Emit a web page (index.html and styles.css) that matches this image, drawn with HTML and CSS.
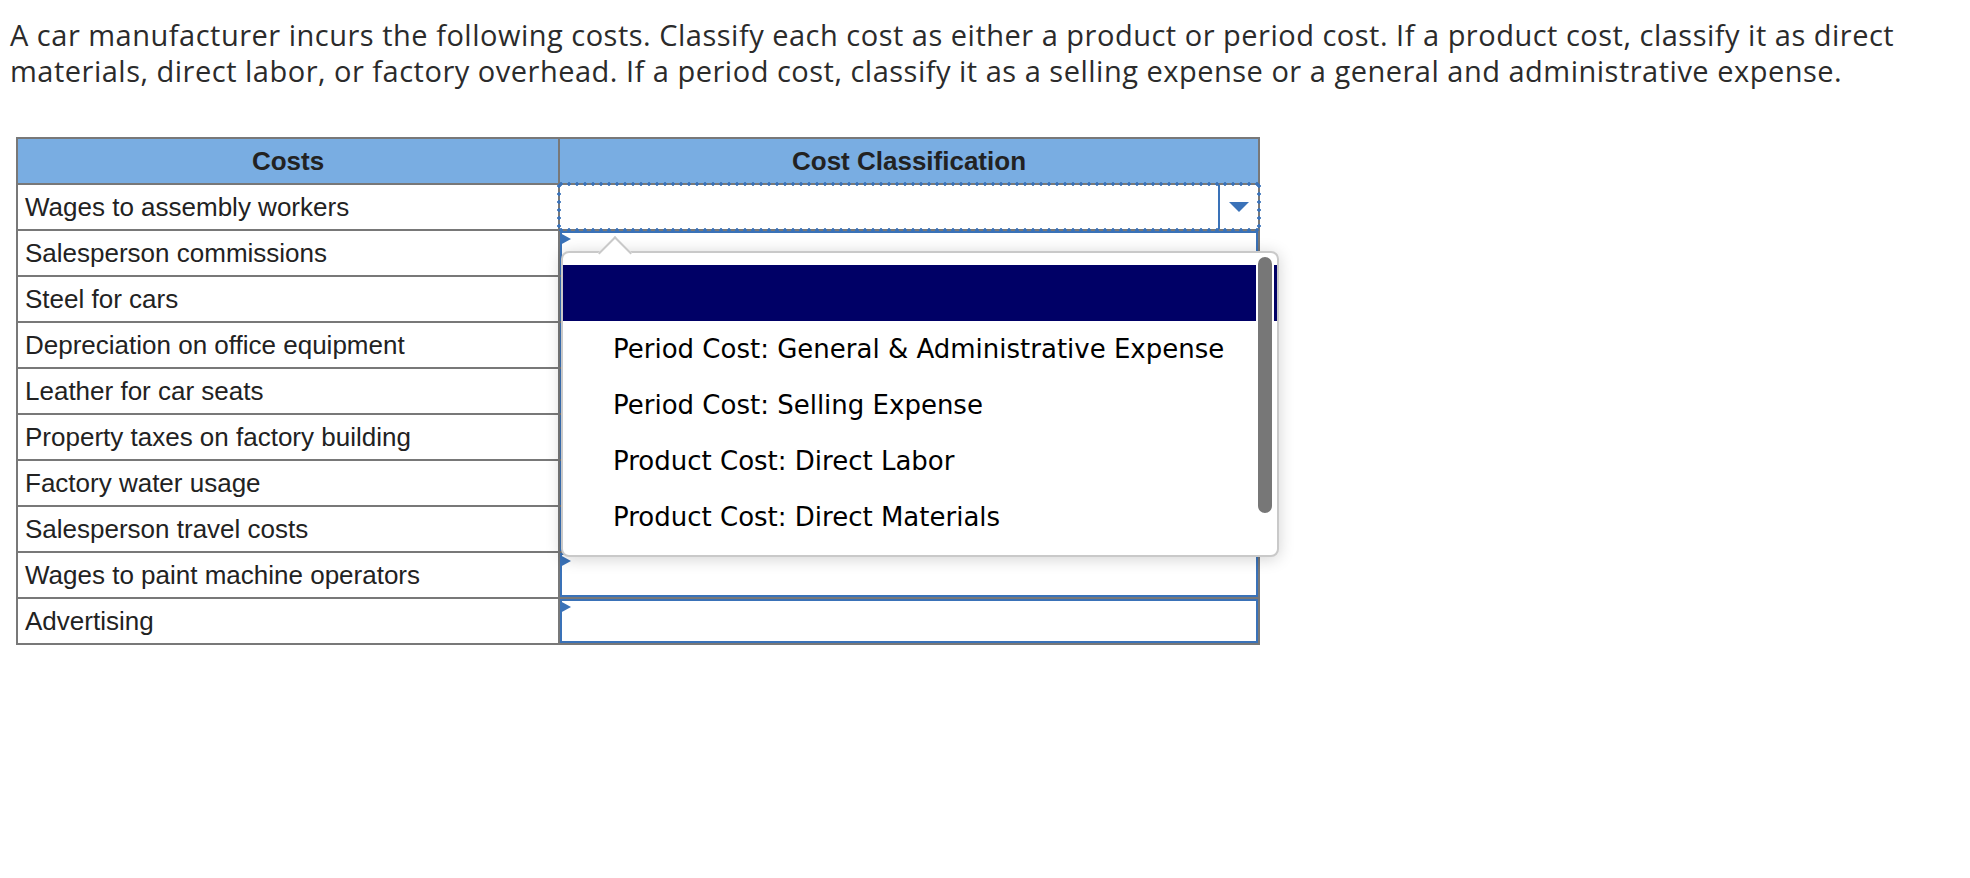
FILE: index.html
```html
<!DOCTYPE html>
<html lang="en">
<head>
  <meta charset="UTF-8">
  <meta name="viewport" content="width=device-width, initial-scale=1.0">
  <title>Cost Classification</title>
  <link rel="stylesheet" href="styles.css">
</head>

<body>
<p class="prompt">A car manufacturer incurs the following costs. Classify each cost as either a product or period cost. If a product cost, classify it as direct materials, direct labor, or factory overhead. If a period cost, classify it as a selling expense or a general and administrative expense.</p>

<div class="question">
  <table class="costs">
    <thead>
      <tr>
        <th class="col-cost">Costs</th>
        <th class="col-class">Cost Classification</th>
      </tr>
    </thead>
    <tbody>
      <tr>
        <td class="name">Wages to assembly workers</td>
        <td class="pick">
          <div class="answer focused">
            <span class="toggle"><span class="arrow"></span></span>
          </div>
        </td>
      </tr>
      <tr>
        <td class="name">Salesperson commissions</td>
        <td class="pick"><div class="answer"></div></td>
      </tr>
      <tr>
        <td class="name">Steel for cars</td>
        <td class="pick"><div class="answer"></div></td>
      </tr>
      <tr>
        <td class="name">Depreciation on office equipment</td>
        <td class="pick"><div class="answer"></div></td>
      </tr>
      <tr>
        <td class="name">Leather for car seats</td>
        <td class="pick"><div class="answer"></div></td>
      </tr>
      <tr>
        <td class="name">Property taxes on factory building</td>
        <td class="pick"><div class="answer"></div></td>
      </tr>
      <tr>
        <td class="name">Factory water usage</td>
        <td class="pick"><div class="answer"></div></td>
      </tr>
      <tr>
        <td class="name">Salesperson travel costs</td>
        <td class="pick"><div class="answer"></div></td>
      </tr>
      <tr>
        <td class="name">Wages to paint machine operators</td>
        <td class="pick"><div class="answer"></div></td>
      </tr>
      <tr>
        <td class="name">Advertising</td>
        <td class="pick"><div class="answer"></div></td>
      </tr>
    </tbody>
  </table>

  <div class="dropdown">
    <ul class="options">
      <li class="selected"></li>
      <li>Period Cost: General &amp; Administrative Expense</li>
      <li>Period Cost: Selling Expense</li>
      <li>Product Cost: Direct Labor</li>
      <li>Product Cost: Direct Materials</li>
    </ul>
    <div class="thumb"></div>
  </div>
</div>

</body>
</html>
```

FILE: styles.css
```css
body {
  margin: 0;
  padding-top: 17px;
  background: #fff;
  color: #222;
}
.prompt {
  margin: 0 10px;
  font-family: "Open Sans", "Lato", sans-serif;
  font-size: 29px;
  line-height: 36px;
  letter-spacing: 0.5px;
  color: #2b2b2b;
}
.question {
  position: relative;
  width: 1244px;
  margin: 48px 0 0 16px;
}
.costs {
  width: 1244px;
  table-layout: fixed;
  border-collapse: separate;
  border-spacing: 0;
  border-top: 2px solid #787878;
  border-left: 2px solid #787878;
  font-family: "Liberation Sans", Arial, sans-serif;
  font-size: 26px;
}
th, td {
  box-sizing: border-box;
  height: 46px;
  padding: 0 7px;
  border-right: 2px solid #787878;
  border-bottom: 2px solid #787878;
  vertical-align: middle;
  line-height: 30px;
}
th {
  background-color: #79ade2;
  font-weight: bold;
  text-align: center;
  color: #222;
}
.col-cost {
  width: 542px;
}
.col-class {
  width: 700px;
}
td.name {
  text-align: left;
  color: #222;
}
td.pick {
  padding: 0;
}
.answer {
  position: relative;
  box-sizing: border-box;
  height: 44px;
  border: 2px solid #3a72b8;
  background: #fff;
}
.answer::before {
  content: "";
  position: absolute;
  top: 0;
  left: -2px;
  border-left: 11px solid #3a72b8;
  border-top: 6px solid transparent;
  border-bottom: 6px solid transparent;
}
.answer.focused {
  z-index: 2;
  border: none;
  display: flex;
  justify-content: flex-end;
}
.answer.focused::before {
  display: none;
}
/* dotted focus ring drawn over the cell borders */
.answer.focused::after {
  content: "";
  position: absolute;
  top: -3px;
  right: -3px;
  bottom: -3px;
  left: -3px;
  pointer-events: none;
  background:
    radial-gradient(circle, #3a72b8 1.5px, transparent 2px) left top / 8px 4px repeat-x,
    radial-gradient(circle, #3a72b8 1.5px, transparent 2px) left bottom / 8px 4px repeat-x,
    radial-gradient(circle, #3a72b8 1.5px, transparent 2px) left top / 4px 8px repeat-y,
    radial-gradient(circle, #3a72b8 1.5px, transparent 2px) right top / 4px 8px repeat-y;
}
.toggle {
  width: 38px;
  border-left: 2px solid #3a72b8;
  display: flex;
  align-items: center;
  justify-content: center;
}
.arrow {
  border-left: 10px solid transparent;
  border-right: 10px solid transparent;
  border-top: 10px solid #3a72b8;
  margin-top: -1px;
}

/* open select list */
.dropdown {
  position: absolute;
  z-index: 3;
  left: 545px;
  top: 114px;
  width: 718px;
  height: 306px;
  box-sizing: border-box;
  padding: 12px 0 10px;
  background: #fff;
  border: 2px solid #c9c9c9;
  border-radius: 8px;
  box-shadow: 0 2px 16px rgba(0, 0, 0, 0.18);
}
.dropdown::before {
  content: "";
  position: absolute;
  left: 40px;
  top: -12px;
  width: 22px;
  height: 22px;
  background: #fff;
  border-top: 2px solid #c9c9c9;
  border-left: 2px solid #c9c9c9;
  transform: rotate(45deg);
}
.options {
  position: relative;
  list-style: none;
  margin: 0;
  padding: 0;
  font-family: "DejaVu Sans", Verdana, sans-serif;
  font-size: 26px;
  color: #000;
}
.options li {
  height: 56px;
  line-height: 56px;
  padding-left: 50px;
  white-space: nowrap;
}
.options li.selected {
  background-color: #000066;
}
.thumb {
  position: absolute;
  left: 693px;
  top: 2px;
  width: 14px;
  height: 256px;
  border: 2px solid #fff;
  border-radius: 9px;
  background: #777;
}
```
